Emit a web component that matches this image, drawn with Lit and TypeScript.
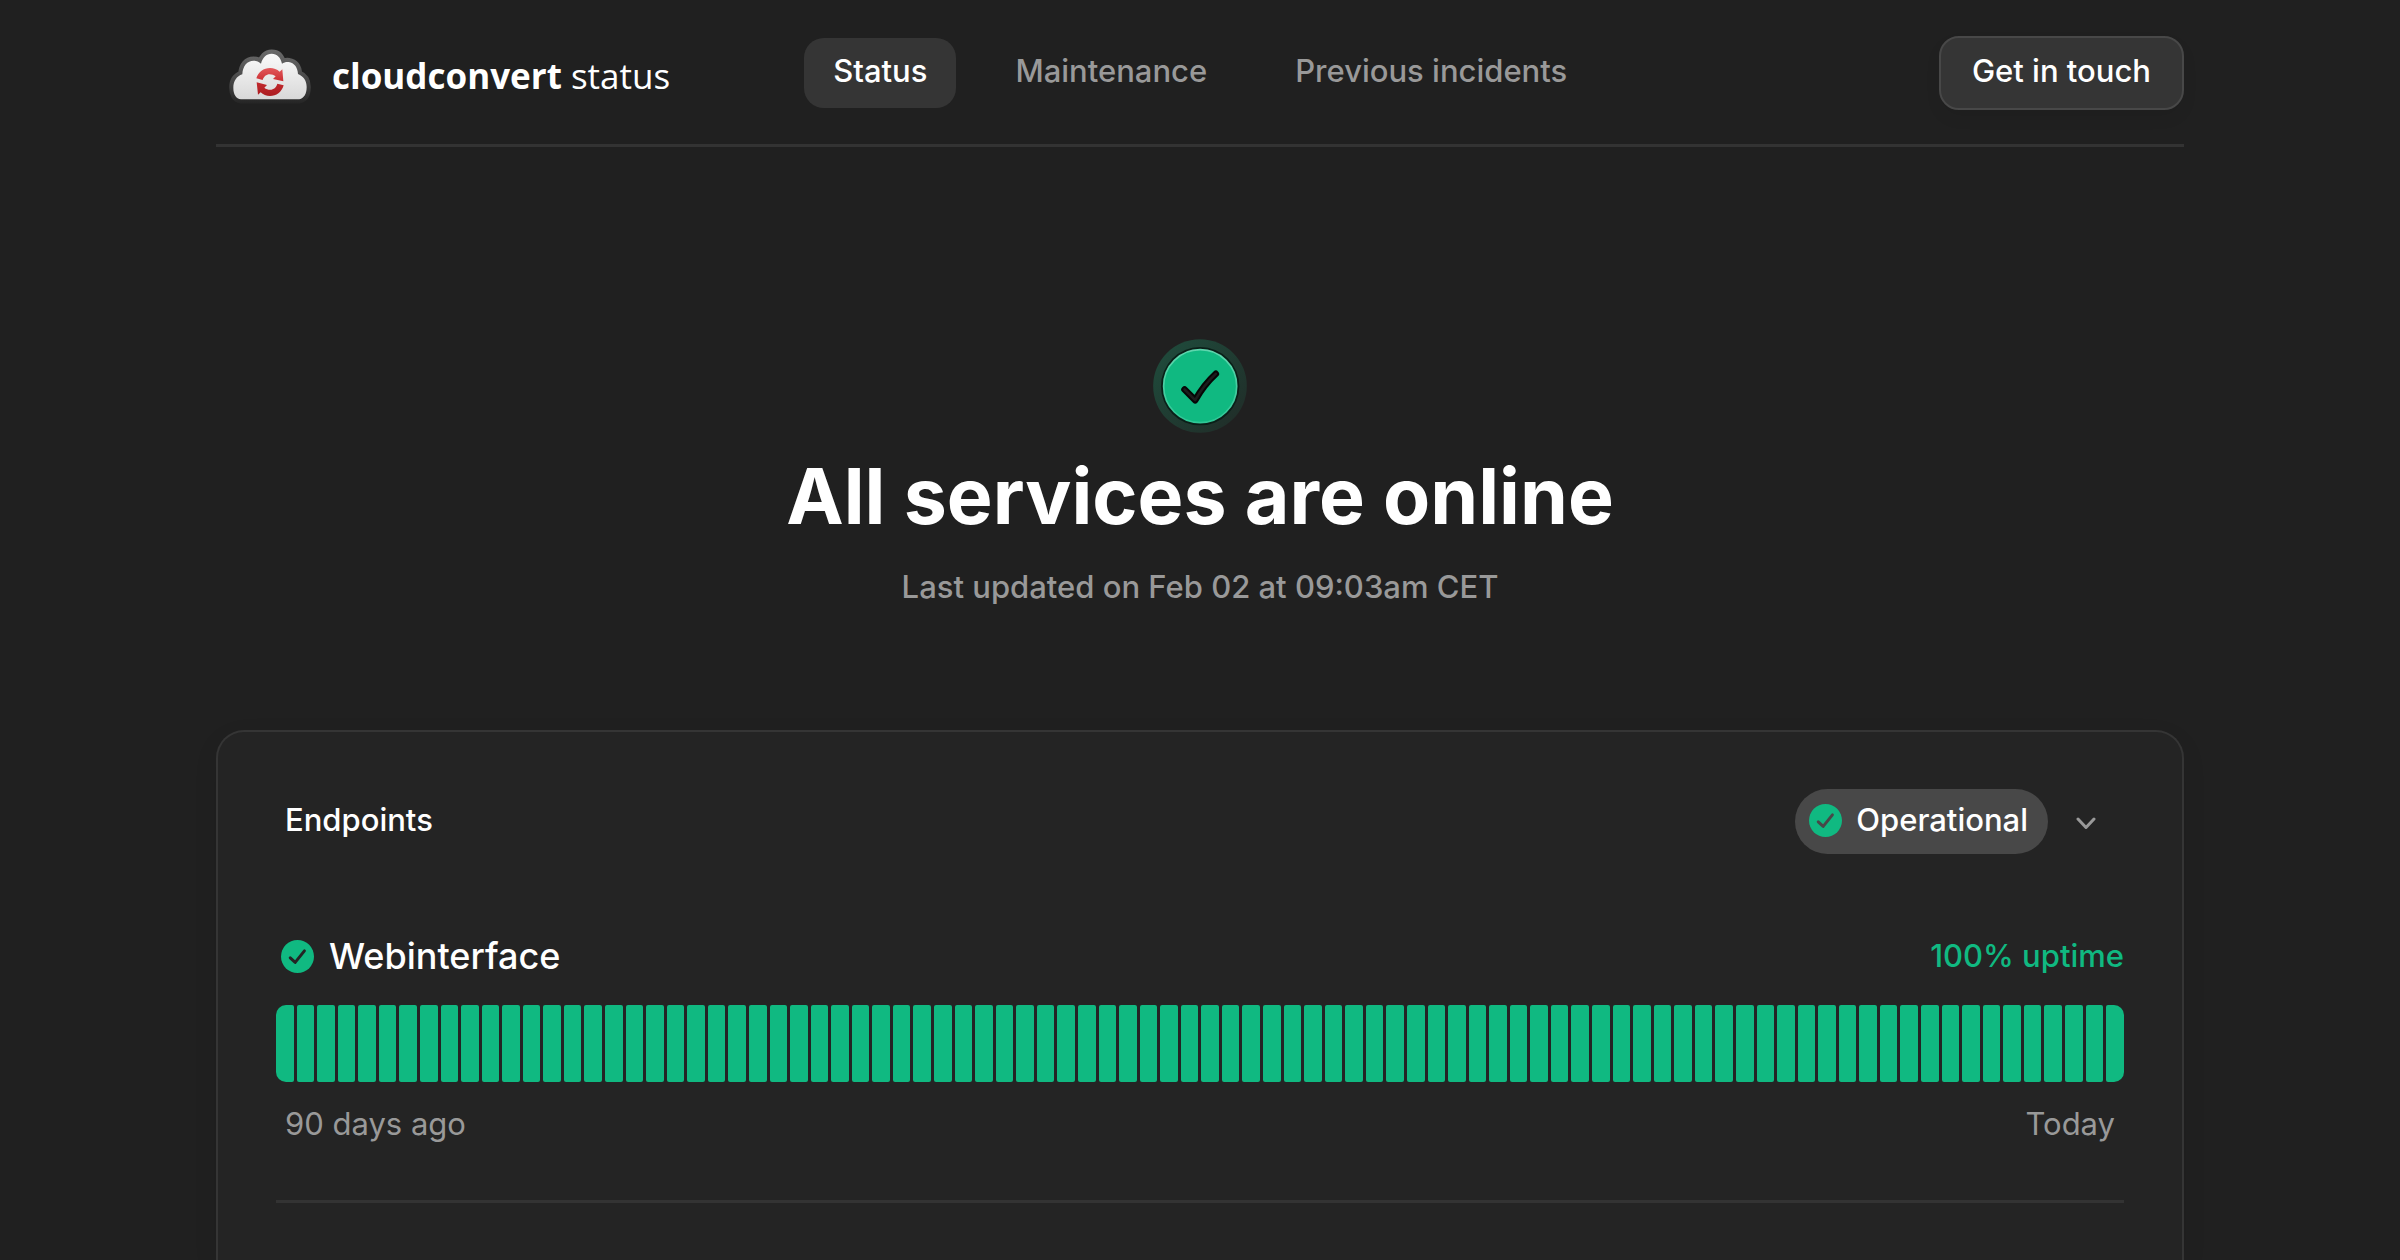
import { LitElement, html, css } from "lit";
import { customElement, state } from "lit/decorators.js";

const DAYS = Array.from({ length: 90 }, (_, i) => i);

const checkBadge = () => html`
  <svg class="badge" viewBox="0 0 100 100" aria-hidden="true">
    <circle cx="50" cy="50" r="50" fill="#10b981"></circle>
    <path d="M28 54 L43 68 L71 33" fill="none" stroke="currentColor" stroke-width="9" stroke-linecap="round" stroke-linejoin="round"></path>
  </svg>
`;

const cloudLogo = () => html`
  <svg class="logo" viewBox="54 48 252 174" aria-hidden="true">
    <defs>
      <linearGradient id="cloud" x1="0" y1="0" x2="0" y2="1">
        <stop offset="0" stop-color="#fafafa"></stop>
        <stop offset="1" stop-color="#d8d8d8"></stop>
      </linearGradient>
      <linearGradient id="rim" gradientUnits="userSpaceOnUse" x1="0" y1="54" x2="0" y2="216">
        <stop offset="0" stop-color="#6c6c6c"></stop>
        <stop offset="0.5" stop-color="#4c4c4c"></stop>
        <stop offset="1" stop-color="#262626"></stop>
      </linearGradient>
      <linearGradient id="arrow-top" gradientUnits="userSpaceOnUse" x1="0" y1="111" x2="0" y2="151">
        <stop offset="0" stop-color="#e2575a"></stop>
        <stop offset="1" stop-color="#cb2f33"></stop>
      </linearGradient>
      <linearGradient id="arrow-bottom" gradientUnits="userSpaceOnUse" x1="0" y1="153" x2="0" y2="195">
        <stop offset="0" stop-color="#c22a2e"></stop>
        <stop offset="1" stop-color="#ab1c20"></stop>
      </linearGradient>
    </defs>
    <path d="M93 205 C78 203 70 190 70 170 C70 150 80 136 97 130 C98 104 112 89 131 89 C139 89 147 92 153 98 C157 80 169 68 185 68 C201 68 212 79 216 98 C222 94 229 92 236 93 C253 96 263 109 264 129 C281 136 290 150 290 168 C290 188 283 201 268 205 Z"
      fill="none" stroke="url(#rim)" stroke-width="25" stroke-linejoin="round"></path>
    <path d="M93 205 C78 203 70 190 70 170 C70 150 80 136 97 130 C98 104 112 89 131 89 C139 89 147 92 153 98 C157 80 169 68 185 68 C201 68 212 79 216 98 C222 94 229 92 236 93 C253 96 263 109 264 129 C281 136 290 150 290 168 C290 188 283 201 268 205 Z"
      fill="url(#cloud)"></path>
    <path d="M139 142 C145 122 161 111 180 111 C191 111 201 115 209 122 L217 115 L220 151 L189 144 L197 136 C192 132 186 130 179 130 C169 130 161 137 158 147 Z" fill="url(#arrow-top)"></path>
    <path d="M221 163 C215 184 199 195 180 195 C169 195 159 191 152 184 L144 191 L140 154 L171 162 L163 170 C168 174 174 176 181 176 C191 176 199 169 202 158 Z" fill="url(#arrow-bottom)"></path>
  </svg>
`;

@customElement("app-root")
export class AppRoot extends LitElement {
  @state() private open = true;

  static styles = css`
    :host {
      display: flex;
      flex-direction: column;
      align-items: center;
      min-height: 100vh;
      background: #202020;
      color: #fff;
      font-family: Inter, "Liberation Sans", sans-serif;
      font-size: 31px;
      line-height: 40px;
      font-weight: 500;
    }
    * { box-sizing: border-box; }
    a { color: inherit; text-decoration: none; }
    button { font: inherit; color: inherit; cursor: pointer; }
    .page {
      display: flex;
      flex-direction: column;
      flex: 1;
      width: 82%;
    }
    .header {
      display: flex;
      align-items: center;
      padding: 36px 0 34px;
      border-bottom: 3px solid #333;
    }
    .brand {
      display: flex;
      align-items: center;
      gap: 20px;
      padding: 6px 0 0 12px;
      font-family: "Open Sans", "Noto Sans", sans-serif;
      font-size: 35px;
      font-weight: 400;
      white-space: nowrap;
    }
    .brand b { font-weight: 700; }
    .logo { width: 84px; height: 58px; }
    .nav {
      display: flex;
      gap: 30px;
      margin-left: 134px;
      color: #999;
      white-space: nowrap;
    }
    .nav a { padding: 13px 29px 17px; border-radius: 20px; }
    .nav a.current { background: #353535; color: #fff; }
    .contact {
      margin-left: auto;
      padding: 13px 31px 17px;
      border: 2px solid #484848;
      border-radius: 20px;
      background: #353535;
      box-shadow: 0 8px 16px rgba(0, 0, 0, 0.06);
      white-space: nowrap;
    }
    .hero {
      display: flex;
      flex-direction: column;
      align-items: center;
      padding: 192px 0 123px;
      text-align: center;
    }
    .hero-icon { width: 94px; height: 94px; }
    h1 {
      margin: 17px 0 25px;
      font-size: 77px;
      line-height: 92px;
      font-weight: 700;
    }
    .updated { margin: 0; color: #999; }
    .card {
      flex: 1;
      padding: 57px 58px 0;
      border: 2px solid #353535;
      border-bottom: 0;
      border-radius: 28px 28px 0 0;
      background: #242424;
      box-shadow: 0 8px 24px rgba(0, 0, 0, 0.08);
    }
    .group { display: flex; align-items: center; }
    h2 {
      flex: 1;
      margin: 0;
      padding: 0 9px 4px;
      font: inherit;
    }
    .badge { width: 33px; height: 33px; flex: none; }
    .pill {
      display: flex;
      align-items: center;
      gap: 14px;
      padding: 11px 20px 14px 14px;
      border-radius: 33px;
      background: #484848;
    }
    .pill .badge { color: #484848; }
    .toggle {
      display: flex;
      padding: 16px 28px 12px;
      border: 0;
      background: none;
      color: #999;
    }
    .chevron { width: 20px; height: 14px; }
    .service {
      padding: 78px 0 56px;
      border-bottom: 3px solid #333;
    }
    .service-head {
      display: flex;
      align-items: center;
      justify-content: space-between;
      line-height: 48px;
    }
    h3 {
      display: flex;
      align-items: center;
      gap: 15px;
      margin: 0;
      padding-left: 5px;
      font-size: 36px;
      font-weight: 500;
    }
    h3 .badge { color: #242424; }
    .uptime { color: #10b981; }
    .bars {
      display: flex;
      gap: 3px;
      height: 77px;
      margin: 25px 0 22px;
    }
    .bar {
      flex: 1;
      border-radius: 2px;
      background: #10b981;
    }
    .bar:first-child { border-radius: 10px 2px 2px 10px; }
    .bar:last-child { border-radius: 2px 10px 10px 2px; }
    .range {
      display: flex;
      justify-content: space-between;
      padding: 0 9px;
      color: #999;
      font-weight: 400;
    }
  `;

  render() {
    return html`
      <div class="page">
        <header class="header">
          <a class="brand" href="#">
            ${cloudLogo()}
            <span><b>cloudconvert</b> status</span>
          </a>
          <nav class="nav">
            <a class="current" href="#status" aria-current="page">Status</a>
            <a href="#maintenance">Maintenance</a>
            <a href="#incidents">Previous incidents</a>
          </nav>
          <button class="contact" type="button">Get in touch</button>
        </header>

        <section class="hero">
          <svg class="hero-icon" viewBox="68 57 283 283" aria-hidden="true">
            <defs>
              <linearGradient id="halo" x1="0" y1="0" x2="1" y2="1">
                <stop offset="0.1" stop-color="#1f4a3b"></stop>
                <stop offset="0.9" stop-color="#202e29"></stop>
              </linearGradient>
              <linearGradient id="edge" x1="0" y1="0" x2="0" y2="1">
                <stop offset="0" stop-color="#5fd6ae"></stop>
                <stop offset="1" stop-color="#2fc796"></stop>
              </linearGradient>
            </defs>
            <circle cx="209.5" cy="198.5" r="141" fill="url(#halo)"></circle>
            <circle cx="210" cy="199" r="118" fill="#0a1f18"></circle>
            <circle cx="210" cy="199" r="110" fill="#10b981" stroke="url(#edge)" stroke-width="5"></circle>
            <path d="M163 209 L195 241 C211 213 233 184 257 162" fill="none" stroke="#060606" stroke-width="20" stroke-linecap="round" stroke-linejoin="round"></path>
            <path d="M163 209 L195 241 C211 213 233 184 257 162" fill="none" stroke="#1c1c1c" stroke-width="8" stroke-linecap="round" stroke-linejoin="round"></path>
          </svg>
          <h1>All services are online</h1>
          <p class="updated">Last updated on Feb 02 at 09:03am CET</p>
        </section>

        <section class="card">
          <div class="group">
            <h2>Endpoints</h2>
            <span class="pill">${checkBadge()}Operational</span>
            <button class="toggle" type="button" aria-label="Toggle endpoints" aria-expanded=${this.open ? "true" : "false"}
              @click=${() => (this.open = !this.open)}>
              <svg class="chevron" viewBox="0 0 20 14" aria-hidden="true">
                <path d="M2 2 L10 10.5 L18 2" fill="none" stroke="currentColor" stroke-width="3" stroke-linecap="round" stroke-linejoin="round"></path>
              </svg>
            </button>
          </div>
          ${this.open
            ? html`
                <article class="service">
                  <div class="service-head">
                    <h3>${checkBadge()}Webinterface</h3>
                    <span class="uptime">100% uptime</span>
                  </div>
                  <div class="bars">${DAYS.map(() => html`<span class="bar"></span>`)}</div>
                  <div class="range"><span>90 days ago</span><span>Today</span></div>
                </article>
              `
            : null}
        </section>
      </div>
    `;
  }
}
